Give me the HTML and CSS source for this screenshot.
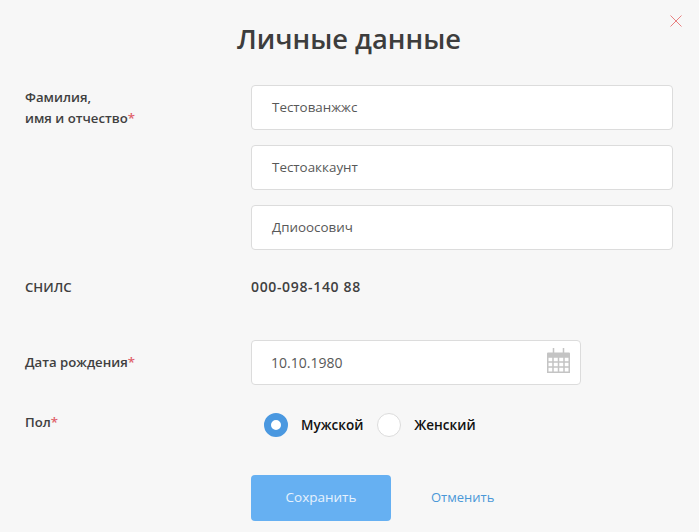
FILE: index.html
```html
<!DOCTYPE html>
<html lang="ru">
<head>
<meta charset="utf-8">
<title>Личные данные</title>
<link rel="stylesheet" href="styles.css">
</head>
<body>
<main class="modal">
  <button class="close" type="button" aria-label="Закрыть">
    <svg width="12" height="12" viewBox="0 0 12 12"><path d="M.5.5l11 11M11.500.5l-11 11" stroke="#e88080" stroke-width="1" fill="none"/></svg>
  </button>
  <h1 class="title">Личные данные</h1>
  <form class="form">
    <div class="row row-name">
      <div class="label label-name">Фамилия,<br>имя и отчество<span class="req">*</span></div>
      <div class="stack">
        <div class="field"><span class="field-text">Тестованжжс</span></div>
        <div class="field"><span class="field-text">Тестоаккаунт</span></div>
        <div class="field"><span class="field-text">Дпиоосович</span></div>
      </div>
    </div>
    <div class="row row-snils">
      <div class="label">СНИЛС</div>
      <div class="value">000-098-140 88</div>
    </div>
    <div class="row row-date">
      <div class="label">Дата рождения<span class="req">*</span></div>
      <div class="field field-date">
        <span>10.10.1980</span>
        <svg class="cal" width="23" height="26" viewBox="0 0 23 26">
          <path d="M1 4.500h21a1 1 0 0 1 1 1V9H0V5.500a1 1 0 0 1 1-1z" fill="#c4c4c4"/>
          <path d="M6.500 0v7M16.500 0v7" stroke="#c4c4c4" stroke-width="1.500"/>
          <path d="M.75 9v15.250h21.500V9M.75 9h21.500M.75 14h21.500M.75 19h21.500M6 9v15M11.500 9v15M17 9v15" fill="none" stroke="#c4c4c4" stroke-width="1.500"/>
        </svg>
      </div>
    </div>
    <div class="row row-gender">
      <div class="label">Пол<span class="req">*</span></div>
      <div class="radios">
        <div class="radio-item"><span class="radio radio-on"></span><span class="radio-text">Мужской</span></div>
        <div class="radio-item"><span class="radio"></span><span class="radio-text">Женский</span></div>
      </div>
    </div>
    <div class="row row-actions">
      <div></div>
      <div class="actions">
        <button class="save" type="button"><span class="save-text">Сохранить</span></button>
        <a class="cancel" href="#">Отменить</a>
      </div>
    </div>
  </form>
</main>
</body>
</html>
```

FILE: styles.css
```css
* { box-sizing: border-box; }
html, body { margin: 0; height: 100%; }
body {
  background: #f7f7f7;
  font-family: "Open Sans", "Noto Sans", sans-serif;
  color: #3e3e3e;
  overflow: hidden;
}
.modal {
  position: relative;
  width: 699px;
  height: 532px;
  padding: 21px 26px 0 25px;
}
.close {
  position: absolute;
  top: 15px;
  right: 17px;
  width: 12px;
  height: 12px;
  padding: 0;
  border: 0;
  background: none;
  display: block;
}
.close svg { display: block; }
.title {
  margin: 0;
  text-align: center;
  font-size: 27.300px;
  line-height: 36px;
  font-weight: 600;
  color: #3d3d3d;
}
.form { margin-top: 28px; }
.row {
  display: grid;
  grid-template-columns: 226px 1fr;
}
.label {
  font-size: 13.200px;
  font-weight: 600;
  line-height: 25px;
  color: #404040;
}
.label-name { line-height: 21px; padding-top: 2px; }
.req { color: #e0606a; }
.stack { display: flex; flex-direction: column; gap: 15px; }
.field {
  height: 45px;
  background: #fff;
  border: 1px solid #dcdcdc;
  border-radius: 4px;
  padding: 0 20px;
  display: flex;
  align-items: center;
  font-size: 13.400px;
  color: #585858;
}
.field-text { margin-top: -2px; }
.row-snils { margin-top: 25px; }
.value {
  font-size: 14px;
  font-weight: 600;
  line-height: 23px;
  letter-spacing: 0.650px;
  color: #404040;
}
.row-date { margin-top: 40px; }
.row-date .label { line-height: 45px; }
.field-date {
  width: 330px;
  justify-content: space-between;
  padding: 0 10px 0 19px;
  font-size: 14px;
}
.cal { display: block; margin-top: -4px; }
.row-gender { margin-top: 25px; }
.row-gender .label { line-height: 25px; }
.radios {
  display: flex;
  gap: 14px;
  padding-left: 13px;
  padding-top: 3px;
}
.radio-item { display: flex; align-items: center; gap: 13px; }
.radio {
  width: 24px;
  height: 24px;
  border-radius: 50%;
  background: #fff;
  border: 1px solid #dcdcdc;
  display: block;
}
.radio-on {
  background: #fff;
  border: 7.500px solid #4a98e0;
}
.radio-text {
  font-size: 13.500px;
  font-weight: 600;
  color: #111;
}
.row-actions { margin-top: 38px; }
.actions { display: flex; align-items: center; gap: 40px; }
.save {
  width: 140px;
  height: 46px;
  border: 0;
  border-radius: 4px;
  background: #66b0f2;
  color: #e6f2fd;
  font-family: inherit;
  font-size: 13.500px;
  padding: 0;
}
.save-text { position: relative; top: -1px; }
.cancel {
  color: #4a98d8;
  font-size: 13px;
  text-decoration: none;
  margin-top: -2px;
}
```
